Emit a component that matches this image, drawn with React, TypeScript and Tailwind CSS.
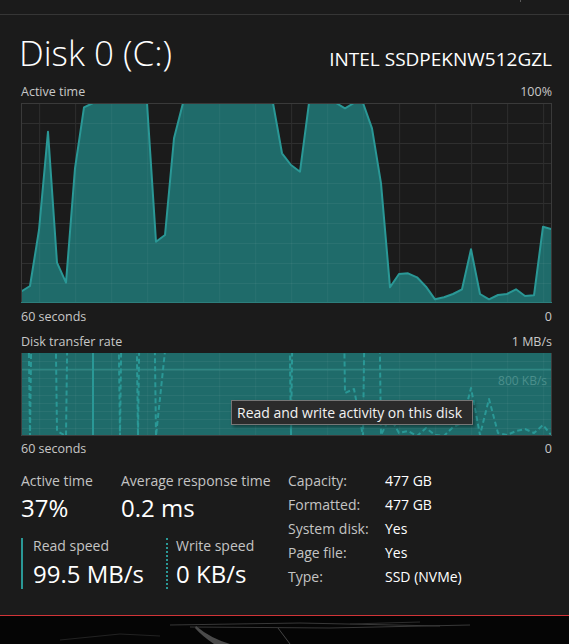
import React from 'react';

// active time samples, 0 = top (100%), 200 = bottom
const active = [
  188.7, 183, 127, 28.7, 159.7, 179.7, 65.3, 4.3, 0, 0, 0, 0, 0, 0, 0, 138.7, 132, 35.3, 0, 0, 0, 0, 0, 0, 0,
  0, 0, 0, 0, 50.3, 62, 68.7, 0, 0, 0, 0, 5.3, 0, 0, 25.3, 80.3, 184.3, 171, 170.3, 174.3, 183.7, 196.3,
  194.3, 191, 186.3, 146.3, 191, 196.3, 192, 191, 186.3, 193, 192.3, 123.7, 126.3,
];

// write rate samples for the transfer chart, 83 = bottom, negative = off the scale
const H = -600;
const write = [
  H, 83, H, H, 78, 83, H, H, H, H, H, 83, H, 83, H, 83, -2, H, H, H, H, H, H, H, H, H, H, H, H, H, 83, H, H, H,
  H, H, 40, 36, 83, H, 82, 64, 80, 78, 83, 75, 82, 83, 74, 70, 35, 82, 46, 80, 82, 78, 76, 80, 72, 83,
];

const W = 531;
const STEP = W / 59;
const vLines = Array.from({ length: 15 }, (_, i) => 18.7 + i * 36).filter((x) => x < W);

function ActiveChart() {
  const line = active.map((y, i) => `${(i * STEP).toFixed(1)},${y}`).join(' ');
  const area = `0,200 ${line} ${W},200`;
  const grid = (stroke: string) => (
    <g stroke={stroke} strokeWidth={1}>
      {Array.from({ length: 9 }, (_, i) => (
        <line key={'h' + i} x1={0} x2={W} y1={20 * (i + 1) + 0.5} y2={20 * (i + 1) + 0.5} />
      ))}
      {vLines.map((x) => (
        <line key={'v' + x} x1={x} x2={x} y1={0} y2={200} />
      ))}
    </g>
  );
  return (
    <svg width={W} height={200} className="block">
      <defs>
        <clipPath id="activeArea">
          <polygon points={area} />
        </clipPath>
      </defs>
      {grid('#2f2f2f')}
      <polygon points={area} fill="#1f6b6a" />
      <g clipPath="url(#activeArea)">{grid('rgba(255,255,255,0.05)')}</g>
      <polyline points={line} fill="none" stroke="#2a9896" strokeWidth={2} strokeLinejoin="round" />
      <rect x={0.5} y={0.5} width={W - 1} height={199} fill="none" stroke="#3a3a3a" />
      <line x1={0} x2={W} y1={199.5} y2={199.5} stroke="#2d7e7c" />
    </svg>
  );
}

function TransferChart() {
  const h = 83;
  const wline = write.map((y, i) => `${(i * STEP).toFixed(1)},${y}`).join(' ');
  return (
    <svg width={W} height={h} className="block overflow-hidden">
      <rect x={0} y={0} width={W} height={h} fill="#1f6b6a" />
      <g stroke="rgba(255,255,255,0.05)" strokeWidth={1}>
        {Array.from({ length: 9 }, (_, i) => (
          <line key={'h' + i} x1={0} x2={W} y1={Math.round(8.3 * (i + 1)) + 0.5} y2={Math.round(8.3 * (i + 1)) + 0.5} />
        ))}
        {vLines.map((x) => (
          <line key={'v' + x} x1={x} x2={x} y1={0} y2={h} />
        ))}
      </g>
      <line x1={0} x2={W} y1={16.5} y2={16.5} stroke="#2f8683" strokeWidth={1.5} />
      <line x1={72} x2={72} y1={0} y2={h} stroke="#2a9896" strokeWidth={2} />
      <polyline
        points={wline}
        fill="none"
        stroke="#2a9896"
        strokeWidth={2}
        strokeDasharray="5 3"
        strokeLinejoin="round"
      />
      <text x={526} y={32} textAnchor="end" fontSize={12} fill="#4b8f8c" fontFamily="Open Sans, sans-serif">
        800 KB/s
      </text>
      <path d={`M0.5,0 V${h - 0.5} H${W - 0.5} V0`} fill="none" stroke="#3c3c3c" />
    </svg>
  );
}

function Wallpaper() {
  return (
    <svg width={569} height={28} className="block">
      <rect width={569} height={28} fill="#050505" />
      <path d="M170 9 L300 7 L440 10" stroke="#5a5a5a" strokeWidth={1} fill="none" opacity={0.6} />
      <path d="M190 11 L330 12 L470 9" stroke="#383838" strokeWidth={1} fill="none" />
      <path d="M196 10 Q210 22 230 28 L214 28 Q202 20 195 12 Z" fill="#4a4a4a" />
      <path d="M278 12 L290 28" stroke="#444" strokeWidth={1} />
      <path d="M60 24 L120 18 L160 20" stroke="#222" strokeWidth={1} fill="none" />
      <path d="M350 8 L420 6" stroke="#2c2c2c" strokeWidth={1} />
    </svg>
  );
}

const details: [string, string][] = [
  ['Capacity:', '477 GB'],
  ['Formatted:', '477 GB'],
  ['System disk:', 'Yes'],
  ['Page file:', 'Yes'],
  ['Type:', 'SSD (NVMe)'],
];

export default function App() {
  return (
    <div className="relative w-[569px] h-[644px] overflow-hidden bg-[#1b1b1b] flex flex-col font-['Open_Sans',sans-serif] text-white">
      <div className="h-[14px] shrink-0">
        <div className="ml-[520px] w-px h-[2px] bg-[#5a5a5a]" />
      </div>
      <div className="h-px shrink-0 bg-[#363636]" />

      <div className="pl-[21px] pr-[17px] flex flex-col">
        <div className="mt-[18px] flex justify-between items-start">
          <div className="-ml-[2px] text-[35px] leading-[40px] font-light">Disk 0 (C:)</div>
          <div className="mt-[14px] text-[19px] leading-[24px]">INTEL SSDPEKNW512GZL</div>
        </div>

        <div className="mt-[11px] flex justify-between text-[12.5px] leading-[16px] text-[#c8c8c8]">
          <span>Active time</span>
          <span>100%</span>
        </div>
        <div className="mt-[3px]">
          <ActiveChart />
        </div>
        <div className="mt-[6px] flex justify-between text-[12.5px] leading-[16px] text-[#c8c8c8]">
          <span>60 seconds</span>
          <span>0</span>
        </div>

        <div className="mt-[9px] flex justify-between text-[12.5px] leading-[16px] text-[#c8c8c8]">
          <span>Disk transfer rate</span>
          <span>1 MB/s</span>
        </div>
        <div className="mt-[3px]">
          <TransferChart />
        </div>
        <div className="mt-[5px] flex justify-between text-[12.5px] leading-[16px] text-[#c8c8c8]">
          <span>60 seconds</span>
          <span>0</span>
        </div>

        <div className="mt-[12px] flex">
          <div className="w-[267px] flex flex-col">
            <div className="flex">
              <div className="w-[100px]">
                <div className="text-[14px] leading-[24px] text-[#c4c4c4]">Active time</div>
                <div className="text-[24px] leading-[30px]">37%</div>
              </div>
              <div>
                <div className="text-[14px] leading-[24px] text-[#c4c4c4]">Average response time</div>
                <div className="text-[24px] leading-[30px]">0.2 ms</div>
              </div>
            </div>
            <div className="mt-[15px] flex">
              <div className="w-[145px] border-l-2 border-[#2a9896] pl-[10px]">
                <div className="text-[14px] leading-[15px] text-[#c4c4c4]">Read speed</div>
                <div className="mt-[6px] text-[24px] leading-[30px]">99.5 MB/s</div>
              </div>
              <div className="border-l-2 border-dotted border-[#2a9896] pl-[8px]">
                <div className="text-[14px] leading-[15px] text-[#c4c4c4]">Write speed</div>
                <div className="mt-[6px] text-[24px] leading-[30px]">0 KB/s</div>
              </div>
            </div>
          </div>

          <div className="grid grid-cols-[97px_auto] text-[14px] leading-[24px]">
            {details.map(([k, v]) => (
              <React.Fragment key={k}>
                <span className="text-[#c4c4c4]">{k}</span>
                <span>{v}</span>
              </React.Fragment>
            ))}
          </div>
        </div>
      </div>

      <div className="flex-1" />
      <div className="h-px shrink-0 bg-[#d13438]" />
      <div className="h-[28px] shrink-0">
        <Wallpaper />
      </div>

      <div className="absolute left-[231px] top-[400px] w-[242px] h-[25px] bg-[#2b2b2b] border border-[#767676] pl-[5px] text-[14px] leading-[23px] text-[#f2f2f2] shadow-[2px_2px_3px_rgba(0,0,0,0.4)] whitespace-nowrap">
        Read and write activity on this disk
      </div>
    </div>
  );
}
